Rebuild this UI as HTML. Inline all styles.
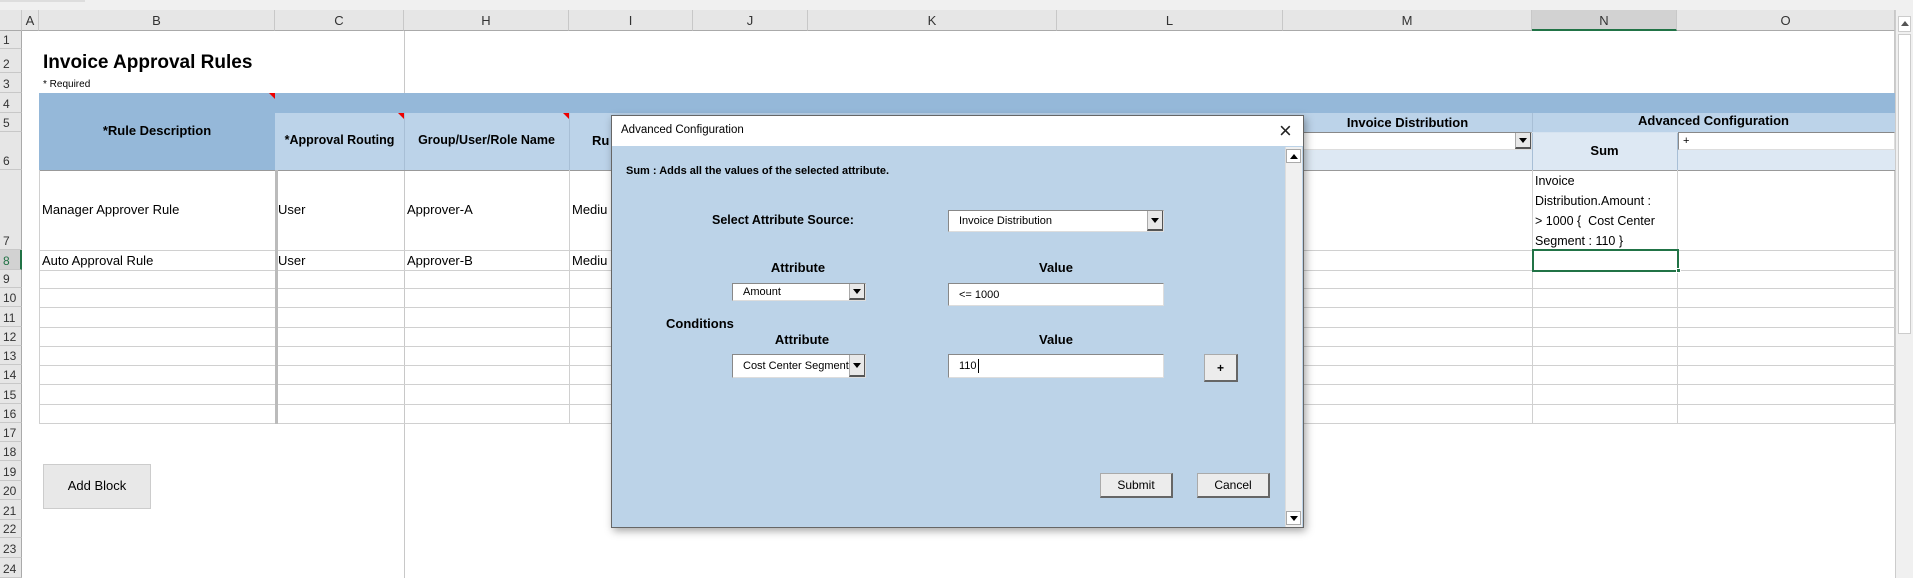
<!DOCTYPE html>
<html><head><meta charset="utf-8"><style>
*{margin:0;padding:0;box-sizing:border-box}
body{width:1913px;height:578px;overflow:hidden;background:#fff;font-family:"Liberation Sans",sans-serif;position:relative;font-size:13px;color:#000}
.a{position:absolute}
.ch{position:absolute;top:10px;height:21px;background:#e6e6e6;border-right:1px solid #c8c8c8;border-bottom:1px solid #aaa;text-align:center;line-height:21px;font-size:13px;color:#333}
.rh{position:absolute;left:0;width:22px;background:#e6e6e6;border-bottom:1px solid #c8c8c8;border-right:1px solid #aaa;font-size:12px;color:#333;padding-left:3px;display:flex;align-items:flex-end;padding-bottom:1px}
.h{position:absolute;height:1px;background:#d0d0d0;left:39px;width:1856px}
.v{position:absolute;width:1px;background:#d0d0d0;top:170px;height:254px}
.t{position:absolute;font-size:13px;white-space:nowrap}
.b{font-weight:bold}
.tri{position:absolute;width:0;height:0;border-top:6px solid #e00;border-left:6px solid transparent}
.dd{position:absolute;background:#fff;border:1px solid #888;border-right:1px solid #ddd;border-bottom:1px solid #ddd;font-size:11px;padding-left:10px;display:flex;align-items:center}
.arr{position:absolute;right:0;top:0;bottom:0;width:16px;background:#e8e8e8;border-left:1px solid #aaa;border-bottom:2px solid #555;border-right:1px solid #555}
.arr:after{content:"";position:absolute;left:3px;top:50%;margin-top:-2px;border-top:5px solid #000;border-left:4px solid transparent;border-right:4px solid transparent}
.btn{position:absolute;background:#ececec;border:1px solid #aaa;border-right:2px solid #666;border-bottom:2px solid #666;font-size:12px;text-align:center}
</style></head><body>
<div class="a" style="left:0;top:0;width:1913px;height:10px;background:#f0f0f0"></div>
<div class="a" style="left:0;top:0;width:85px;height:2px;background:#ddd"></div>
<div class="ch" style="left:0;width:22px"></div>
<div class="ch" style="left:22px;width:17px">A</div>
<div class="ch" style="left:39px;width:236px">B</div>
<div class="ch" style="left:275px;width:129px">C</div>
<div class="ch" style="left:404px;width:165px">H</div>
<div class="ch" style="left:569px;width:124px">I</div>
<div class="ch" style="left:693px;width:115px">J</div>
<div class="ch" style="left:808px;width:249px">K</div>
<div class="ch" style="left:1057px;width:226px">L</div>
<div class="ch" style="left:1283px;width:249px">M</div>
<div class="ch" style="left:1532px;width:145px;background:#d2d2d2;border-bottom:2px solid #217346">N</div>
<div class="ch" style="left:1677px;width:218px">O</div>
<div class="a" style="left:1895px;top:10px;width:18px;height:568px;background:#f0f0f0;border-left:1px solid #ccc"></div>
<div class="a" style="left:1898px;top:16px;width:13px;height:16px;background:#fff;border:1px solid #ccc"><div class="a" style="left:2px;top:4px;border-bottom:5px solid #555;border-left:4px solid transparent;border-right:4px solid transparent"></div></div>
<div class="a" style="left:1898px;top:34px;width:13px;height:300px;background:#fff;border:1px solid #ccc"></div>
<div class="rh" style="top:31px;height:18px">1</div>
<div class="rh" style="top:49px;height:24px">2</div>
<div class="rh" style="top:73px;height:20px">3</div>
<div class="rh" style="top:93px;height:20px">4</div>
<div class="rh" style="top:113px;height:19px">5</div>
<div class="rh" style="top:132px;height:38px">6</div>
<div class="rh" style="top:170px;height:80px">7</div>
<div class="rh" style="top:250px;height:20px;background:#d2d2d2;border-right:2px solid #217346;color:#217346">8</div>
<div class="rh" style="top:270px;height:18px">9</div>
<div class="rh" style="top:288px;height:19px">10</div>
<div class="rh" style="top:307px;height:20px">11</div>
<div class="rh" style="top:327px;height:19px">12</div>
<div class="rh" style="top:346px;height:19px">13</div>
<div class="rh" style="top:365px;height:19px">14</div>
<div class="rh" style="top:384px;height:20px">15</div>
<div class="rh" style="top:404px;height:19px">16</div>
<div class="rh" style="top:423px;height:19px">17</div>
<div class="rh" style="top:442px;height:19px">18</div>
<div class="rh" style="top:461px;height:20px">19</div>
<div class="rh" style="top:481px;height:19px">20</div>
<div class="rh" style="top:500px;height:20px">21</div>
<div class="rh" style="top:520px;height:18px">22</div>
<div class="rh" style="top:538px;height:20px">23</div>
<div class="rh" style="top:558px;height:20px">24</div>
<div class="a" style="left:404px;top:31px;width:1px;height:547px;background:#c8c8c8"></div>
<div class="a" style="left:1894px;top:31px;width:1px;height:393px;background:#c8c8c8"></div>
<div class="t b" style="left:43px;top:52px;font-size:19px">Invoice Approval Rules</div>
<div class="t" style="left:43px;top:79px;font-size:10px">* Required</div>
<div class="a" style="left:39px;top:93px;width:1856px;height:20px;background:#95b8d9"></div>
<div class="a" style="left:39px;top:93px;width:236px;height:77px;background:#95b8d9"></div>
<div class="a" style="left:275px;top:113px;width:1620px;height:57px;background:#bcd3e9"></div>
<div class="a" style="left:1283px;top:149px;width:612px;height:21px;background:#dde8f3"></div>
<div class="a" style="left:1532px;top:132px;width:145px;height:38px;background:#dde8f3"></div>
<div class="a" style="left:404px;top:113px;width:1px;height:57px;background:#a8bfd6"></div>
<div class="a" style="left:569px;top:113px;width:1px;height:57px;background:#a8bfd6"></div>
<div class="a" style="left:1532px;top:113px;width:1px;height:57px;background:#a8bfd6"></div>
<div class="a" style="left:1677px;top:132px;width:1px;height:38px;background:#a8bfd6"></div>
<div class="a" style="left:1532px;top:132px;width:363px;height:1px;background:#d6e3f0"></div>
<div class="tri" style="left:269px;top:93px"></div>
<div class="tri" style="left:398px;top:113px"></div>
<div class="tri" style="left:563px;top:113px"></div>
<div class="t b" style="left:39px;width:236px;text-align:center;top:123px">*Rule Description</div>
<div class="t b" style="left:275px;width:129px;text-align:center;top:133px;font-size:12.5px">*Approval Routing</div>
<div class="t b" style="left:404px;width:165px;text-align:center;top:133px;font-size:12.5px">Group/User/Role Name</div>
<div class="t b" style="left:592px;top:133px">Ru</div>
<div class="t b" style="left:1283px;width:249px;text-align:center;top:115px">Invoice Distribution</div>
<div class="t b" style="left:1532px;width:363px;text-align:center;top:113px">Advanced Configuration</div>
<div class="t b" style="left:1532px;width:145px;text-align:center;top:143px">Sum</div>
<div class="dd" style="left:1283px;top:132px;width:249px;height:18px"><span class="arr"></span></div>
<div class="dd" style="left:1678px;top:132px;width:217px;height:18px;padding-left:4px">+</div>
<div class="h" style="top:170px;background:#999"></div>
<div class="h" style="top:250px"></div><div class="h" style="top:270px"></div><div class="h" style="top:288px"></div>
<div class="h" style="top:307px"></div><div class="h" style="top:327px"></div><div class="h" style="top:346px"></div>
<div class="h" style="top:365px"></div><div class="h" style="top:384px"></div><div class="h" style="top:404px"></div>
<div class="h" style="top:423px"></div>
<div class="v" style="left:39px"></div>
<div class="v" style="left:275px;width:3px;background:#bbb"></div>
<div class="v" style="left:569px"></div><div class="v" style="left:693px"></div>
<div class="v" style="left:1283px"></div><div class="v" style="left:1532px"></div><div class="v" style="left:1677px"></div>
<div class="t" style="left:42px;top:202px">Manager Approver Rule</div>
<div class="t" style="left:278px;top:202px">User</div>
<div class="t" style="left:407px;top:202px">Approver-A</div>
<div class="t" style="left:572px;top:202px">Mediu</div>
<div class="t" style="left:42px;top:253px">Auto Approval Rule</div>
<div class="t" style="left:278px;top:253px">User</div>
<div class="t" style="left:407px;top:253px">Approver-B</div>
<div class="t" style="left:572px;top:253px">Mediu</div>
<div class="t" style="left:1535px;top:171px;line-height:20px;font-size:12.5px">Invoice<br>Distribution.Amount :<br>&gt; 1000 {&nbsp; Cost Center<br>Segment : 110 }</div>
<div class="a" style="left:1532px;top:249px;width:147px;height:23px;border:2px solid #217346"></div>
<div class="a" style="left:1676px;top:268px;width:5px;height:5px;background:#217346;border:1px solid #fff"></div>
<div class="btn" style="left:43px;top:464px;width:108px;height:45px;line-height:42px;font-size:13px;background:#e8e8e8;border:1px solid #ccc">Add Block</div>
<div class="a" style="left:611px;top:115px;width:693px;height:413px;background:#bcd3e8;border:1px solid #666;box-shadow:2px 3px 8px rgba(0,0,0,.35)">
  <div class="a" style="left:0;top:0;width:691px;height:30px;background:#fff"></div>
  <div class="t" style="left:9px;top:8px;font-size:11.5px">Advanced Configuration</div>
  <div class="t" style="left:667px;top:2px;font-size:22px;color:#222">×</div>
  <div class="a" style="left:673px;top:31px;width:17px;height:380px;background:#f0f0f0;border-left:1px solid #ddd"></div>
  <div class="a" style="left:674px;top:33px;width:15px;height:14px;background:#fff;border:1px solid #aaa"><div class="a" style="left:3px;top:4px;border-bottom:5px solid #000;border-left:4px solid transparent;border-right:4px solid transparent"></div></div>
  <div class="a" style="left:674px;top:395px;width:15px;height:14px;background:#fff;border:1px solid #aaa"><div class="a" style="left:3px;top:4px;border-top:5px solid #000;border-left:4px solid transparent;border-right:4px solid transparent"></div></div>
  <div class="t b" style="left:14px;top:49px;font-size:11px">Sum : Adds all the values of the selected attribute.</div>
  <div class="t b" style="left:100px;top:97px;font-size:12.5px">Select Attribute Source:</div>
  <div class="dd" style="left:336px;top:94px;width:216px;height:22px">Invoice Distribution<span class="arr"></span></div>
  <div class="t b" style="left:130px;top:144px;width:112px;text-align:center">Attribute</div>
  <div class="t b" style="left:336px;top:144px;width:216px;text-align:center">Value</div>
  <div class="dd" style="left:120px;top:167px;width:134px;height:18px">Amount<span class="arr"></span></div>
  <div class="dd" style="left:336px;top:167px;width:216px;height:23px">&lt;= 1000</div>
  <div class="t b" style="left:54px;top:200px">Conditions</div>
  <div class="t b" style="left:130px;top:216px;width:120px;text-align:center">Attribute</div>
  <div class="t b" style="left:336px;top:216px;width:216px;text-align:center">Value</div>
  <div class="dd" style="left:120px;top:238px;width:134px;height:24px">Cost Center Segment<span class="arr"></span></div>
  <div class="dd" style="left:336px;top:238px;width:216px;height:24px">110<span style="border-left:1px solid #000;height:14px;margin-left:1px"></span></div>
  <div class="btn" style="left:592px;top:238px;width:34px;height:28px;line-height:26px;font-weight:bold">+</div>
  <div class="btn" style="left:488px;top:357px;width:73px;height:25px;line-height:22px">Submit</div>
  <div class="btn" style="left:585px;top:357px;width:73px;height:25px;line-height:22px">Cancel</div>
</div>
</body></html>
